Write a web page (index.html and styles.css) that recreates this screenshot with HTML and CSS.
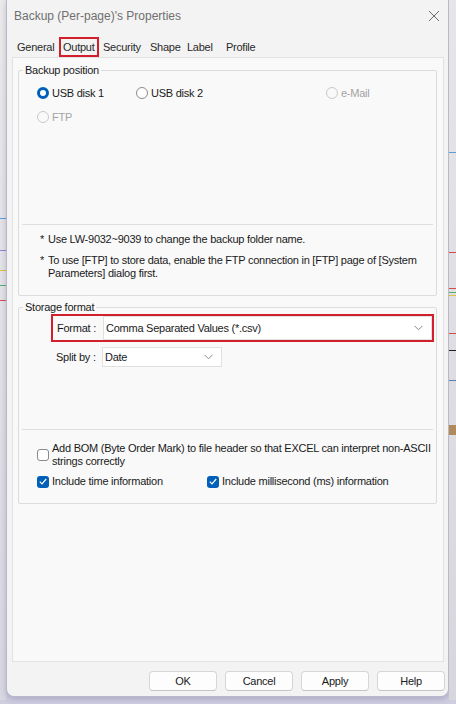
FILE: index.html
```html
<!DOCTYPE html>
<html lang="en">
<head>
    <meta charset="utf-8">
    <title>Backup (Per-page)'s Properties</title>
    <link rel="stylesheet" href="styles.css">
</head>
<body>

<div class="desk">
    <div class="strip strip-left"></div>

    <div class="window">
        <!-- title bar -->
        <div class="titlebar">
            <span class="title">Backup (Per-page)'s Properties</span>
            <svg class="close" width="12" height="12" viewBox="0 0 12 12">
                <path d="M1 1 L11 11 M11 1 L1 11" stroke="#6e6e6e" stroke-width="1" fill="none"/>
            </svg>
        </div>

        <!-- tabs -->
        <div class="tabs">
            <span class="tab t-general">General</span>
            <span class="tab active">Output</span>
            <span class="tab t-security">Security</span>
            <span class="tab t-shape">Shape</span>
            <span class="tab t-label">Label</span>
            <span class="tab t-profile">Profile</span>
        </div>

        <div class="panel">
            <fieldset class="group">
                <legend>Backup position</legend>
                <div class="radios">
                    <label class="opt"><span class="radio checked"></span>USB disk 1</label>
                    <label class="opt"><span class="radio"></span>USB disk 2</label>
                    <label class="opt disabled"><span class="radio"></span>e-Mail</label>
                    <label class="opt disabled"><span class="radio"></span>FTP</label>
                </div>
                <div class="sep"></div>
                <div class="notes">
                    <p class="note"><span class="star">*</span><span>Use LW-9032~9039 to change the backup folder name.</span></p>
                    <p class="note"><span class="star">*</span><span>To use [FTP] to store data, enable the FTP connection in [FTP] page of [System Parameters] dialog first.</span></p>
                </div>
            </fieldset>

            <fieldset class="group storage">
                <legend>Storage format</legend>
                <div class="row format-row">
                    <span class="lbl">Format :</span>
                    <div class="select wide">
                        <span>Comma Separated Values (*.csv)</span>
                        <svg width="9" height="6" viewBox="0 0 9 6"><path d="M0.5 0.8 L4.5 4.8 L8.5 0.8" stroke="#8a8a8a" fill="none"/></svg>
                    </div>
                </div>
                <div class="row split-row">
                    <span class="lbl">Split by :</span>
                    <div class="select short">
                        <span>Date</span>
                        <svg width="9" height="6" viewBox="0 0 9 6"><path d="M0.5 0.8 L4.5 4.8 L8.5 0.8" stroke="#8a8a8a" fill="none"/></svg>
                    </div>
                </div>
                <div class="sep sep2"></div>
                <label class="check bom">
                    <span class="box"></span>
                    <span>Add BOM (Byte Order Mark) to file header so that EXCEL can interpret non-ASCII strings correctly</span>
                </label>
                <div class="checks">
                    <label class="check time"><span class="box on"><svg width="8" height="7" viewBox="0 0 8 7"><path d="M0.8 3.6 L3 5.8 L7.2 1" stroke="#fff" stroke-width="1.2" fill="none"/></svg></span>Include time information</label>
                    <label class="check"><span class="box on"><svg width="8" height="7" viewBox="0 0 8 7"><path d="M0.8 3.6 L3 5.8 L7.2 1" stroke="#fff" stroke-width="1.2" fill="none"/></svg></span>Include millisecond (ms) information</label>
                </div>
            </fieldset>
        </div>

        <div class="buttons">
            <button class="btn">OK</button>
            <button class="btn">Cancel</button>
            <button class="btn">Apply</button>
            <button class="btn">Help</button>
        </div>
    </div>

    <div class="strip strip-right"></div>
</div>

</body>
</html>
```

FILE: styles.css
```css
/* page */
*
{
    box-sizing: border-box;
}

body
{
    margin: 0;
    background: #cfcee0;
    font-family: "Liberation Sans", Arial, sans-serif;
    font-size: 11px;
    letter-spacing: -0.25px;
    color: #1a1a1a;
}

.desk
{
    display: flex;
    height: 704px;
    overflow: hidden;
}

/* bits of the window behind */
.strip
{
    width: 6px;
    height: 700px;
}

.strip-left
{
    background:
        linear-gradient(#9a7fd0, #9a7fd0) 0 250px / 6px 1px no-repeat,
        linear-gradient(#e0c23a, #e0c23a) 0 270px / 6px 1px no-repeat,
        linear-gradient(#54b071, #54b071) 0 285px / 6px 1px no-repeat,
        linear-gradient(#d84a4a, #d84a4a) 0 300px / 6px 1px no-repeat,
        linear-gradient(#5a9fd8, #5a9fd8) 0 218px / 6px 1px no-repeat,
        linear-gradient(#ebebeb, #d8d8e2);
}

.strip-right
{
    width: 7px;
    background:
        linear-gradient(#5a9fd8, #5a9fd8) 0 152px / 7px 1px no-repeat,
        linear-gradient(#d84a4a, #d84a4a) 0 252px / 7px 1px no-repeat,
        linear-gradient(#d84a4a, #d84a4a) 0 288px / 7px 1px no-repeat,
        linear-gradient(#54b071, #54b071) 0 292px / 7px 1px no-repeat,
        linear-gradient(#e0c23a, #e0c23a) 0 295px / 7px 1px no-repeat,
        linear-gradient(#d84a4a, #d84a4a) 0 333px / 7px 1px no-repeat,
        linear-gradient(#222, #222) 0 350px / 7px 1px no-repeat,
        linear-gradient(#5a7fb0, #5a7fb0) 0 380px / 7px 1px no-repeat,
        linear-gradient(#b08a5a, #b08a5a) 0 425px / 7px 10px no-repeat,
        linear-gradient(#e6e6e8, #d6d6dc);
}

/* dialog */
.window
{
    width: 443px;
    height: 697px;
    background: #f3f3f3;
    border: 1px solid #b9b8c8;
    border-top: none;
    border-radius: 0 0 8px 8px;
    box-shadow: 0 2px 6px rgba(60, 50, 110, 0.25);
    display: flex;
    flex-direction: column;
}

.titlebar
{
    height: 33px;
    display: flex;
    align-items: center;
    justify-content: space-between;
    padding: 0 8px 0 7px;
}

.title
{
    font-size: 12px;
    letter-spacing: 0;
    color: #6f6f6f;
    margin-top: -1px;
}

.close
{
    margin-top: -1px;
}

.tabs
{
    height: 24px;
    display: flex;
    align-items: stretch;
    padding: 4px 0 0 5px;
    color: #2a2a2a;
}

.tab
{
    display: flex;
    align-items: center;
    padding-left: 4px;
    flex: none;
}

.t-general
{
    width: 47px;
    padding-left: 5px;
}

.tab.active
{
    width: 40px;
    border: 2px solid #d21f2b;
    padding-left: 2px;
}

.t-security
{
    width: 47px;
}

.t-shape
{
    width: 37px;
}

.t-label
{
    width: 38px;
}

.t-profile
{
    padding-left: 5px;
}

.panel
{
    height: 605px;
    margin: 0 4px 0 5px;
    background: #f9f9f9;
    border: 1px solid #e2e2e2;
    padding: 6px 6px 0 5px;
}

/* group boxes */
.group
{
    margin: 0;
    padding: 0;
    border: 1px solid #dcdcdc;
    border-radius: 2px;
}

.group legend
{
    padding: 0 2px;
    margin-left: 4px;
    line-height: 13px;
    color: #1a1a1a;
}

.radios
{
    height: 147px;
    display: grid;
    grid-template-columns: 99px 190px auto;
    grid-auto-rows: 16px;
    row-gap: 8px;
    padding: 8px 0 0 18px;
}

.opt
{
    display: flex;
    align-items: center;
    gap: 3px;
}

.opt:nth-child(4)
{
    grid-column: 1;
}

.radio
{
    width: 12px;
    height: 12px;
    border-radius: 50%;
    border: 1px solid #8a8a8a;
    background: #fff;
}

.radio.checked
{
    border: 3.5px solid #005fb8;
}

.opt.disabled
{
    color: #a3a3a3;
}

.opt.disabled .radio
{
    border-color: #c9c9c9;
    background: transparent;
}

.sep
{
    height: 1px;
    margin: 0 3px;
    background: #dedede;
}

.notes
{
    padding: 8px 10px 15px 21px;
}

.note
{
    display: flex;
    margin: 0;
    line-height: 13px;
}

.note + .note
{
    margin-top: 8px;
}

.star
{
    width: 8px;
    flex: none;
}

.storage
{
    margin-top: 5px;
    padding-bottom: 15px;
}

.row
{
    display: flex;
    align-items: center;
}

.lbl
{
    width: 46px;
    flex: none;
}

.format-row
{
    height: 28px;
    margin: 0 2px 0 32px;
    border: 2px solid #d21f2b;
    padding-left: 4px;
}

.select
{
    display: flex;
    align-items: center;
    justify-content: space-between;
    background: #fff;
    border: 1px solid #e0e0e0;
    padding: 0 8px 0 2px;
}

.select.wide
{
    flex: 1;
    height: 24px;
}

.select.short
{
    width: 120px;
    height: 20px;
}

.split-row
{
    margin: 5px 0 0 37px;
}

.sep2
{
    margin-top: 62px;
}

.check
{
    display: flex;
    align-items: center;
    gap: 3px;
}

.box
{
    width: 12px;
    height: 12px;
    flex: none;
    border: 1px solid #8a8a8a;
    border-radius: 3px;
    background: #fff;
    display: flex;
    align-items: center;
    justify-content: center;
}

.box.on
{
    border: none;
    background: #005fb8;
}

.bom
{
    margin: 12px 0 0 18px;
    line-height: 13px;
}

.checks
{
    display: flex;
    margin: 7px 0 0 18px;
    line-height: 13px;
}

.check.time
{
    width: 170px;
}

/* bottom buttons */
.buttons
{
    display: flex;
    justify-content: flex-end;
    gap: 8px;
    margin: 9px 3px 0 0;
}

.btn
{
    width: 68px;
    height: 20px;
    font-family: inherit;
    font-size: 11px;
    letter-spacing: -0.25px;
    color: #1a1a1a;
    background: #fdfdfd;
    border: 1px solid #d6d6d6;
    border-bottom-color: #c4c4c4;
    border-radius: 4px;
    padding: 0;
}
```
